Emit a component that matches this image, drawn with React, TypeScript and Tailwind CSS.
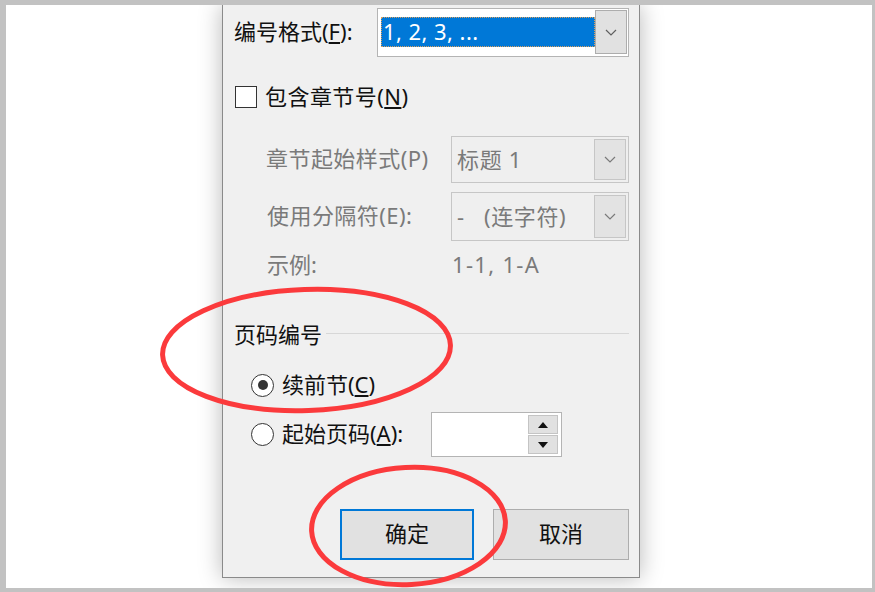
import React from "react";

const font = "font-['Noto_Sans','Noto_Sans_CJK_SC',sans-serif]";

function Chevron({ color = "#5f5f5f" }: { color?: string }) {
  return (
    <svg width="12" height="7" viewBox="0 0 12 7">
      <polyline points="1,1 6,6 11,1" fill="none" stroke={color} strokeWidth="1.2" />
    </svg>
  );
}

function DisabledSelect({ text }: { text: string }) {
  return (
    <div className="w-[178px] h-full border border-[#c6c6c6] bg-[#efefef] flex items-stretch pl-[5px] pr-[2px] py-[2px]">
      <div className="flex-1 flex items-center text-[#7a7a7a] whitespace-pre tracking-[0.03em] pb-[2px]">{text}</div>
      <div className="w-[32px] bg-[#e3e3e3] border border-[#c6c6c6] flex items-center justify-center">
        <Chevron color="#7a7a7a" />
      </div>
    </div>
  );
}

function Radio({ checked }: { checked?: boolean }) {
  return (
    <div className="w-[23px] h-[23px] rounded-full border-[1.5px] border-[#333] bg-white flex items-center justify-center shrink-0">
      {checked && <div className="w-[10px] h-[10px] rounded-full bg-[#333]" />}
    </div>
  );
}

export default function App() {
  return (
    <div className={`relative w-[875px] h-[592px] bg-[#c2c2c2] pt-[5px] pl-[6px] pr-[3px] pb-[4px] ${font} text-[22px] leading-none text-[#111]`}>
      <div className="w-full h-full bg-white pl-[216px] overflow-hidden">
        {/* dialog */}
        <div className="w-[418px] h-[573px] bg-[#f0f0f0] border-x border-b border-[#8a8a8a] shadow-[0_0_22px_rgba(0,0,0,0.28)] flex flex-col pl-[11px] pr-[10px]">
          {/* 编号格式 */}
          <div className="mt-[3px] h-[49px] flex items-center justify-between">
            <span className="pb-[3px]">
              编号格式(<span className="underline">F</span>):
            </span>
            <div className="w-[252px] h-full border border-[#b4b4b4] bg-white flex items-stretch pl-[3px] pr-[1px] pt-[1px] pb-[2px]">
              <div className="flex-1 flex items-center py-[7px]">
                <div className="w-full h-full bg-[#0078d7] border border-dotted border-[#d9a060] text-white flex items-center pl-[1px] pb-[2px] tracking-[0.02em]">
                  1, 2, 3, ...
                </div>
              </div>
              <div className="w-[32px] bg-[#e1e1e1] border border-[#adadad] flex items-center justify-center">
                <Chevron />
              </div>
            </div>
          </div>

          {/* 包含章节号 */}
          <div className="mt-[23px] h-[34px] flex items-center">
            <div className="w-[22px] h-[22px] border-[1.5px] border-[#333] bg-white ml-[1px]" />
            <span className="ml-[8px] pb-[3px] tracking-[0.02em]">
              包含章节号(<span className="underline">N</span>)
            </span>
          </div>

          {/* 章节起始样式 */}
          <div className="mt-[22px] h-[47px] flex items-center justify-between pl-[32px] text-[#7a7a7a]">
            <span className="pb-[3px] tracking-[0.02em]">章节起始样式(P)</span>
            <DisabledSelect text="标题 1" />
          </div>

          {/* 使用分隔符 */}
          <div className="mt-[9px] h-[49px] flex items-center justify-between pl-[33px] text-[#7a7a7a]">
            <span className="pb-[3px] tracking-[0.02em]">使用分隔符(E):</span>
            <DisabledSelect text={"-   (连字符)"} />
          </div>

          {/* 示例 */}
          <div className="mt-[11px] h-[26px] flex items-center pl-[33px] text-[#7a7a7a]">
            <span className="w-[185px] pb-[3px]">示例:</span>
            <span className="pb-[3px] tracking-[0.06em]">1-1, 1-A</span>
          </div>

          {/* 页码编号 */}
          <div className="mt-[44px] h-[26px] flex items-center">
            <span className="pb-[3px]">页码编号</span>
            <div className="flex-1 h-px bg-[#d7d7d7] ml-[4px] -mt-[4px]" />
          </div>

          {/* 续前节 */}
          <div className="mt-[24px] h-[26px] flex items-center pl-[17px]">
            <Radio checked />
            <span className="ml-[8px] pb-[3px]">
              续前节(<span className="underline">C</span>)
            </span>
          </div>

          {/* 起始页码 */}
          <div className="mt-[14px] h-[45px] flex items-center pl-[17px]">
            <Radio />
            <span className="ml-[8px] w-[149px] pb-[3px]">
              起始页码(<span className="underline">A</span>):
            </span>
            <div className="w-[131px] h-full border border-[#b4b4b4] bg-white flex justify-end pr-[3px] py-[2px]">
              <div className="w-[30px] flex flex-col gap-px">
                <div className="flex-1 bg-[#e1e1e1] border border-[#c4c4c4] flex items-center justify-center">
                  <svg width="10" height="6" viewBox="0 0 10 6">
                    <polygon points="0,6 10,6 5,0" fill="#111" />
                  </svg>
                </div>
                <div className="flex-1 bg-[#e1e1e1] border border-[#c4c4c4] flex items-center justify-center">
                  <svg width="10" height="6" viewBox="0 0 10 6">
                    <polygon points="0,0 10,0 5,6" fill="#111" />
                  </svg>
                </div>
              </div>
            </div>
          </div>

          {/* buttons */}
          <div className="mt-[52px] h-[51px] flex justify-end gap-[19px]">
            <div className="w-[134px] h-full bg-[#e1e1e1] border-[2px] border-[#0078d7] flex items-center justify-center pb-[3px]">
              确定
            </div>
            <div className="w-[136px] h-full bg-[#e1e1e1] border border-[#adadad] flex items-center justify-center pb-[3px]">
              取消
            </div>
          </div>
        </div>
      </div>

      {/* red annotation ellipses */}
      <svg className="absolute inset-0 pointer-events-none" width="875" height="592" viewBox="0 0 875 592">
        <ellipse cx="306.5" cy="350" rx="144" ry="60.5" fill="none" stroke="#fb3a3c" strokeWidth="5" transform="rotate(-2 306.5 350)" />
        <ellipse cx="408.5" cy="526" rx="97" ry="58.5" fill="none" stroke="#fb3a3c" strokeWidth="5" transform="rotate(-3 408.5 526)" />
      </svg>
    </div>
  );
}
